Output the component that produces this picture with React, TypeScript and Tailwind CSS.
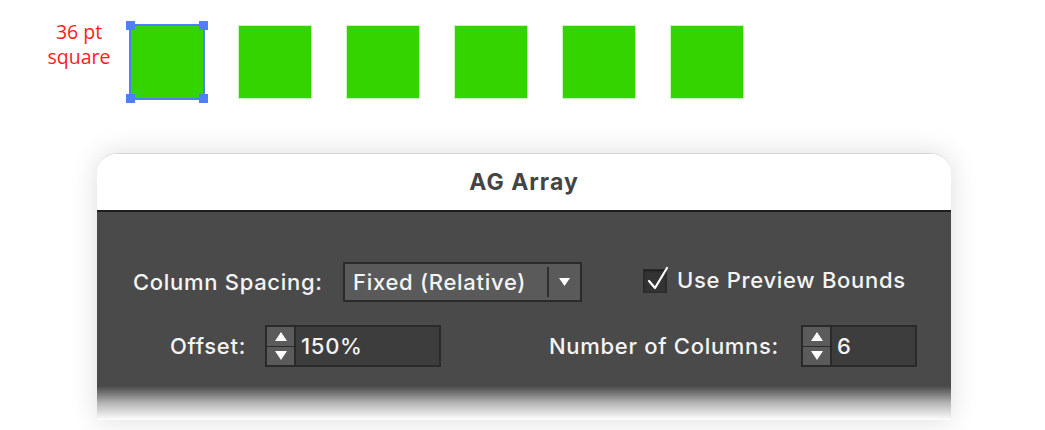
import React from "react";

const ui = { fontFamily: "Inter, 'Liberation Sans', sans-serif" };

function Square({ selected }: { selected?: boolean }) {
  return (
    <div className="relative w-[72px] h-[72px] shrink-0">
      <div
        className={
          "w-full h-full bg-[#33d400] " +
          (selected ? "ring-2 ring-[#4f7fff]" : "ring-1 ring-[#c8f5b8]")
        }
      />
      {selected && (
        <>
          <div className="absolute -left-[5px] -top-[5px] w-[9px] h-[9px] bg-[#4f7fff]" />
          <div className="absolute -right-[5px] -top-[5px] w-[9px] h-[9px] bg-[#4f7fff]" />
          <div className="absolute -left-[5px] -bottom-[5px] w-[9px] h-[9px] bg-[#4f7fff]" />
          <div className="absolute -right-[5px] -bottom-[5px] w-[9px] h-[9px] bg-[#4f7fff]" />
        </>
      )}
    </div>
  );
}

function Stepper() {
  return (
    <div className="flex flex-col w-[29px] h-full border-r-2 border-[#2a2a2a]">
      <div className="flex-1 bg-[#5b5b5b] flex items-center justify-center border-b border-[#2a2a2a]">
        <svg width="12" height="9" viewBox="0 0 12 9">
          <path d="M6 0 L12 9 L0 9 Z" fill="#fff" />
        </svg>
      </div>
      <div className="flex-1 bg-[#5b5b5b] flex items-center justify-center">
        <svg width="12" height="9" viewBox="0 0 12 9">
          <path d="M0 0 L12 0 L6 9 Z" fill="#fff" />
        </svg>
      </div>
    </div>
  );
}

function Spinner({ value, width }: { value: string; width: string }) {
  return (
    <div className={"flex h-[42px] border-2 border-[#2a2a2a] bg-[#3d3d3d] " + width}>
      <Stepper />
      <div className="pl-[5px] flex items-center">{value}</div>
    </div>
  );
}

export default function App() {
  return (
    <div className="w-[1045px] h-[430px] bg-white overflow-hidden" style={ui}>
      <div className="flex items-start pt-[26px] pl-[37px]">
        <div
          className="w-[84px] text-center text-[19.5px] leading-[25px] text-[#ff1a1a] -mt-[7px]"
          style={{ fontFamily: "'Open Sans', 'Noto Sans', sans-serif" }}
        >
          36 pt
          <br />
          square
        </div>
        <div className="flex gap-[36px] ml-[10px]">
          <Square selected />
          <Square />
          <Square />
          <Square />
          <Square />
          <Square />
        </div>
      </div>

      <div className="ml-[97px] mt-[55px] w-[854px] rounded-t-[20px] shadow-[0_0_28px_rgba(0,0,0,0.14)] border-t border-[#d6d6d6] overflow-hidden">
        <div className="h-[56px] bg-white flex items-center justify-center text-[23px] tracking-[1px] font-bold text-[#444]">
          AG Array
        </div>
        <div className="h-[2px] bg-[#1e1e1e]" />
        <div className="bg-[#4a4a4a] pt-[50px] pb-[19px] text-[#f4f4f4] text-[22px] tracking-[0.7px] font-medium">
          <div className="flex items-center pl-[36px]">
            <div className="w-[210px]">Column Spacing:</div>
            <div className="w-[239px] h-[40px] border-2 border-[#2a2a2a] bg-[#5a5a5a] flex items-center">
              <div className="flex-1 pl-[8px]">Fixed (Relative)</div>
              <div className="w-[2px] h-[30px] bg-[#2e2e2e]" />
              <div className="w-[31px] flex items-center justify-center">
                <svg width="11" height="8" viewBox="0 0 11 8">
                  <path d="M0 0 L11 0 L5.5 8 Z" fill="#fff" />
                </svg>
              </div>
            </div>
            <div className="ml-[61px] flex items-center -mt-[3px]">
              <div className="relative w-[24px] h-[24px] bg-[#333] border border-[#2a2a2a] shadow-[inset_0_1px_2px_rgba(0,0,0,0.5)]">
                <svg className="absolute -top-[4px] left-[2px]" width="24" height="26" viewBox="0 0 24 26">
                  <path d="M3 15 L9 22 L21 2" fill="none" stroke="#fff" strokeWidth="2.2" strokeLinecap="round" strokeLinejoin="round" />
                </svg>
              </div>
              <div className="ml-[10px]">Use Preview Bounds</div>
            </div>
          </div>
          <div className="flex items-center pl-[73px] mt-[23px]">
            <div className="w-[95px]">Offset:</div>
            <Spinner value="150%" width="w-[176px]" />
            <div className="ml-[108px] w-[252px]">Number of Columns:</div>
            <Spinner value="6" width="w-[116px]" />
          </div>
        </div>
        <div className="h-[34px] bg-gradient-to-b from-[#4a4a4a] via-[#b5b5b5] to-white" />
      </div>
    </div>
  );
}
